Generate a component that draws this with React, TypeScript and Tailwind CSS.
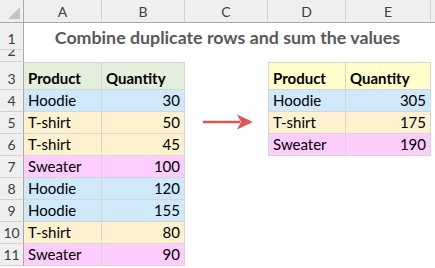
const cols = [
  { key: "A", w: "w-[78px]" },
  { key: "B", w: "w-[83px]" },
  { key: "C", w: "w-[83px]" },
  { key: "D", w: "w-[78px]" },
  { key: "E", w: "w-[85px]" },
];

const source = [
  { name: "Hoodie", qty: 30, bg: "bg-[#cfe9fb]" },
  { name: "T-shirt", qty: 50, bg: "bg-[#fef1cf]" },
  { name: "T-shirt", qty: 45, bg: "bg-[#fef1cf]" },
  { name: "Sweater", qty: 100, bg: "bg-[#fdcdfd]" },
  { name: "Hoodie", qty: 120, bg: "bg-[#cfe9fb]" },
  { name: "Hoodie", qty: 155, bg: "bg-[#cfe9fb]" },
  { name: "T-shirt", qty: 80, bg: "bg-[#fef1cf]" },
  { name: "Sweater", qty: 90, bg: "bg-[#fdcdfd]" },
];

const result = [
  { name: "Hoodie", qty: 305, bg: "bg-[#cfe9fb]" },
  { name: "T-shirt", qty: 175, bg: "bg-[#fef1cf]" },
  { name: "Sweater", qty: 190, bg: "bg-[#fdcdfd]" },
];

function RowNum({ n, h }: { n: number; h: string }) {
  return (
    <div
      className={`${h} w-[24px] shrink-0 box-border bg-[#efefef] border-r border-b border-r-[#a9a9a9] border-b-[#d2d2d2] flex items-end justify-center overflow-hidden text-[14px] leading-[20px] text-[#3d3d3d]`}
    >
      {n}
    </div>
  );
}

function Cell({
  w,
  bg = "",
  right = false,
  bold = false,
  grid = false,
  top = false,
  left = false,
  children,
}: {
  w: string;
  bg?: string;
  right?: boolean;
  bold?: boolean;
  grid?: boolean;
  top?: boolean;
  left?: boolean;
  children?: React.ReactNode;
}) {
  return (
    <div
      className={`${w} h-full shrink-0 box-border flex items-end pb-[1px] px-[4px] text-[15px] leading-[20px] text-black ${bg} ${
        right ? "justify-end" : ""
      } ${bold ? "font-bold" : ""} ${grid ? "border-r border-b border-[#d6d6d6]" : ""} ${
        top ? "border-t" : ""
      } ${left ? "border-l" : ""}`}
    >
      {children}
    </div>
  );
}

export default function App() {
  return (
    <div
      className="relative w-[435px] h-[268px] overflow-hidden bg-white"
      style={{ fontFamily: "Lato, 'Noto Sans', sans-serif" }}
    >
      {/* column header */}
      <div className="flex h-[23px]">
        <div className="relative w-[24px] shrink-0 box-border bg-[#efefef] border-r border-b border-[#a9a9a9]">
          <div className="absolute right-[3px] bottom-[3px] w-0 h-0 border-l-[12px] border-l-transparent border-b-[12px] border-b-[#c4c4c4]" />
        </div>
        {cols.map((c) => (
          <div
            key={c.key}
            className={`${c.w} shrink-0 box-border bg-[#efefef] border-r border-r-[#d2d2d2] border-b border-b-[#a9a9a9] flex items-center justify-center text-[14px] text-[#3d3d3d]`}
          >
            {c.key}
          </div>
        ))}
        <div className="flex-1 bg-[#efefef] border-b border-b-[#a9a9a9]" />
      </div>

      {/* row 1: title */}
      <div className="flex h-[27px]">
        <RowNum n={1} h="h-[27px]" />
        <div className="w-[407px] shrink-0 flex items-end justify-center pb-[1px] text-[17.8px] leading-[24px] font-bold text-[#595959]">
          Combine duplicate rows and sum the values
        </div>
      </div>

      {/* row 2 */}
      <div className="flex h-[12px]">
        <RowNum n={2} h="h-[12px]" />
      </div>

      {/* row 3: headers */}
      <div className="flex h-[28px]">
        <RowNum n={3} h="h-[28px]" />
        <Cell w="w-[78px]" bg="bg-[#e2efda]" bold grid top>
          Product
        </Cell>
        <Cell w="w-[83px]" bg="bg-[#e2efda]" bold grid top>
          Quantity
        </Cell>
        <Cell w="w-[83px]" />
        <Cell w="w-[78px]" bg="bg-[#ffffcc]" bold grid top left>
          Product
        </Cell>
        <Cell w="w-[85px]" bg="bg-[#ffffcc]" bold grid top>
          Quantity
        </Cell>
      </div>

      {/* data rows */}
      {source.map((r, i) => {
        const res = result[i];
        return (
          <div key={i} className="flex h-[22px]">
            <RowNum n={i + 4} h="h-[22px]" />
            <Cell w="w-[78px]" bg={r.bg} grid>
              {r.name}
            </Cell>
            <Cell w="w-[83px]" bg={r.bg} grid right>
              {r.qty}
            </Cell>
            <Cell w="w-[83px]" />
            {res ? (
              <>
                <Cell w="w-[78px]" bg={res.bg} grid left>
                  {res.name}
                </Cell>
                <Cell w="w-[85px]" bg={res.bg} grid right>
                  {res.qty}
                </Cell>
              </>
            ) : null}
          </div>
        );
      })}

      {/* arrow */}
      <svg
        className="absolute left-[202px] top-[112px]"
        width="52"
        height="20"
        viewBox="0 0 52 20"
      >
        <line x1="1" y1="10" x2="38" y2="10" stroke="#e05656" strokeWidth="2.5" />
        <path d="M35 2.5 L51 10 L35 17.5 L39 10 Z" fill="#e05656" />
      </svg>
    </div>
  );
}
